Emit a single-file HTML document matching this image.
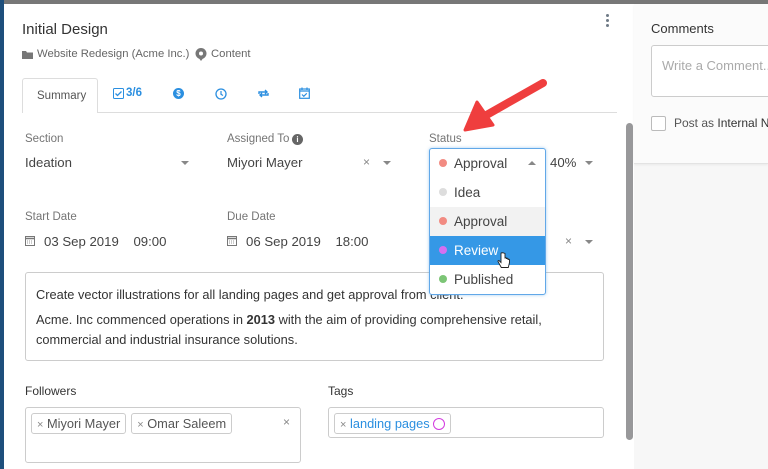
<!DOCTYPE html>
<html><head><style>
*{box-sizing:border-box;margin:0;padding:0}
body{width:768px;height:469px;overflow:hidden;background:#f7f7f7;font-family:"Liberation Sans",sans-serif;position:relative;color:#333}
.a{position:absolute}
.lbl{font-size:11.5px;color:#757575}
.val{font-size:13.2px;color:#444}
.car{width:0;height:0;border-left:4px solid transparent;border-right:4px solid transparent;border-top:4px solid #888}
.x{font-size:12px;color:#888}
.dot{display:inline-block;width:8px;height:8px;border-radius:50%;margin-right:7px;vertical-align:1px}
.it{position:absolute;left:0;width:115px;height:29px;font-size:13.5px;padding:7px 0 0 9px;color:#444}
.tag{display:inline-block;border:1px solid #ccc;border-radius:3px;padding:2px 5px;font-size:12.8px;color:#555;margin-right:5px}
</style></head><body>
<div class="a" style="left:0;top:0;width:768px;height:4px;background:#777"></div>
<div class="a" style="left:0;top:0;width:4px;height:469px;background:#1e4f7c"></div>
<div class="a" style="left:4px;top:4px;width:630px;height:465px;background:#fff"></div>
<div class="a" style="left:634px;top:4px;width:134px;height:160px;background:#fbfbfb;border-bottom:1px solid #e3e3e3;box-shadow:0 1px 2px rgba(0,0,0,.06)"></div>
<div class="a" style="left:651px;top:21px;font-size:13px;color:#333">Comments</div>
<div class="a" style="left:651px;top:45px;width:130px;height:52px;border:1px solid #ccc;border-radius:3px;background:#fff;padding:12px 0 0 10px;font-size:13px;color:#aaa;white-space:nowrap">Write a Comment...</div>
<div class="a" style="left:651px;top:116px;width:15px;height:15px;border:1px solid #bbb;border-radius:2px;background:#fff"></div>
<div class="a" style="left:674px;top:116px;font-size:12px;color:#555;white-space:nowrap">Post as <span style="color:#333">Internal Note</span></div>
<div class="a" style="left:626px;top:123px;width:7px;height:317px;background:#98989a;border-radius:4px"></div>
<div class="a" style="left:606px;top:14px;width:3px;height:3px;background:#6f7a86;border-radius:50%;box-shadow:0 5px 0 #6f7a86,0 10px 0 #6f7a86"></div>
<div class="a" style="left:22px;top:21px;font-size:15px;color:#333">Initial Design</div>
<svg class="a" style="left:22px;top:50px" width="12" height="10" viewBox="0 0 12 10"><path d="M0 1h4l1 1.5h6V9H0z" fill="#777"/></svg>
<div class="a" style="left:37px;top:48px;font-size:11.3px;color:#666">Website Redesign (Acme Inc.)</div>
<svg class="a" style="left:195px;top:48px" width="12" height="13" viewBox="0 0 12 13"><circle cx="6" cy="5.5" r="5.5" fill="#777"/><path d="M3 9l3 4 3-4z" fill="#777"/><circle cx="6" cy="5.5" r="2" fill="#fff"/></svg>
<div class="a" style="left:211px;top:48px;font-size:11.3px;color:#666">Content</div>
<div class="a" style="left:22px;top:112px;width:595px;height:1px;background:#ddd"></div>
<div class="a" style="left:22px;top:78px;width:76px;height:35px;border:1px solid #ddd;border-bottom:none;border-radius:3px 3px 0 0;background:#fff;font-size:11.5px;color:#555;padding:11px 0 0 14px">Summary</div>
<svg class="a" style="left:113px;top:88px" width="11" height="11" viewBox="0 0 11 11"><rect x=".5" y=".5" width="10" height="10" rx="1" fill="none" stroke="#2b8fe0"/><path d="M2.5 5.5l2 2 4-4" fill="none" stroke="#2b8fe0" stroke-width="1.3"/></svg>
<div class="a" style="left:126px;top:87px;font-size:11.5px;color:#2b8fe0;font-weight:bold">3/6</div>
<div class="a" style="left:173px;top:88px;width:11px;height:11px;border-radius:50%;background:#2b8fe0;color:#fff;font-size:8px;font-weight:bold;text-align:center;line-height:11px">$</div>
<svg class="a" style="left:215px;top:88px" width="12" height="12" viewBox="0 0 12 12"><circle cx="6" cy="6" r="5" fill="none" stroke="#2b8fe0" stroke-width="1.3"/><path d="M6 3v3.3l2 1.2" fill="none" stroke="#2b8fe0" stroke-width="1.2"/></svg>
<svg class="a" style="left:257px;top:88px" width="13" height="11" viewBox="0 0 13 11"><path d="M2 6V4h8M8 2l2 2-2 2M11 5v2H3M5 9L3 7l2-2" fill="none" stroke="#2b8fe0" stroke-width="1.4"/></svg>
<svg class="a" style="left:299px;top:87px" width="11" height="12" viewBox="0 0 11 12"><rect x=".7" y="2" width="9.6" height="9.3" fill="none" stroke="#2b8fe0" stroke-width="1.2"/><path d="M.7 4h9.6M3 .5v2.5M8 .5v2.5M3 7.5l1.8 1.8 3-3" fill="none" stroke="#2b8fe0" stroke-width="1.2"/></svg>
<div class="a lbl" style="left:25px;top:133px">Section</div>
<div class="a val" style="left:25px;top:155px">Ideation</div>
<div class="a car" style="left:181px;top:161px"></div>
<div class="a lbl" style="left:227px;top:133px">Assigned To</div>
<div class="a" style="left:292px;top:134px;width:11px;height:11px;border-radius:50%;background:#666;color:#fff;font-size:8px;font-weight:bold;text-align:center;line-height:11px">i</div>
<div class="a val" style="left:227px;top:155px">Miyori Mayer</div>
<div class="a x" style="left:363px;top:155px">×</div>
<div class="a car" style="left:383px;top:161px"></div>
<div class="a lbl" style="left:429px;top:133px">Status</div>
<div class="a val" style="left:550px;top:155px">40%</div>
<div class="a car" style="left:585px;top:161px"></div>
<div class="a lbl" style="left:25px;top:211px">Start Date</div>
<div class="a lbl" style="left:227px;top:211px">Due Date</div>
<svg class="a" style="left:25px;top:235px" width="10" height="11" viewBox="0 0 10 11"><rect x=".5" y="1.5" width="9" height="9" fill="none" stroke="#777"/><path d="M.5 3.5h9" stroke="#777" stroke-width="1.5"/><path d="M2 6h6M2 8h6" stroke="#999" stroke-dasharray="1 1"/></svg>
<div class="a val" style="left:44px;top:234px">03 Sep 2019&nbsp;&nbsp;&nbsp; 09:00</div>
<svg class="a" style="left:227px;top:235px" width="10" height="11" viewBox="0 0 10 11"><rect x=".5" y="1.5" width="9" height="9" fill="none" stroke="#777"/><path d="M.5 3.5h9" stroke="#777" stroke-width="1.5"/><path d="M2 6h6M2 8h6" stroke="#999" stroke-dasharray="1 1"/></svg>
<div class="a val" style="left:246px;top:234px">06 Sep 2019&nbsp;&nbsp;&nbsp; 18:00</div>
<div class="a x" style="left:565px;top:234px">×</div>
<div class="a car" style="left:585px;top:240px"></div>
<div class="a" style="left:25px;top:272px;width:579px;height:89px;border:1px solid #ccc;border-radius:3px;padding:12px 10px;font-size:12.8px;color:#333;line-height:20px">
<div style="margin-bottom:5px;white-space:nowrap">Create vector illustrations for all landing pages and get approval from client.</div>
<div>Acme. Inc commenced operations in <b>2013</b> with the aim of providing comprehensive retail, commercial and industrial insurance solutions.</div></div>
<div class="a" style="left:25px;top:384px;font-size:12px;color:#333">Followers</div>
<div class="a" style="left:328px;top:384px;font-size:12px;color:#333">Tags</div>
<div class="a" style="left:25px;top:407px;width:276px;height:56px;border:1px solid #ccc;border-radius:3px;padding:5px 5px"><span class="tag"><span style="font-size:11px;color:#888">×</span> Miyori Mayer</span><span class="tag"><span style="font-size:11px;color:#888">×</span> Omar Saleem</span></div>
<div class="a x" style="left:283px;top:415px">×</div>
<div class="a" style="left:328px;top:407px;width:276px;height:31px;border:1px solid #ccc;border-radius:3px;padding:5px 5px"><span class="tag" style="color:#2b8fe0"><span style="font-size:11px;color:#888">×</span> landing pages <span style="display:inline-block;width:12px;height:12px;border:1.5px solid #d33be0;border-radius:50%;vertical-align:-2px"></span></span></div>
<div class="a" style="left:429px;top:148px;width:117px;height:147px;border:1px solid #62a8e8;border-radius:3px;background:#fff;box-shadow:0 0 3px rgba(80,160,230,.5);overflow:hidden">
<div class="it" style="top:0"><span class="dot" style="background:#f28b82"></span>Approval</div>
<div class="a" style="left:98px;top:12px;width:0;height:0;border-left:4px solid transparent;border-right:4px solid transparent;border-bottom:4px solid #888"></div>
<div class="it" style="top:29px"><span class="dot" style="background:#ddd"></span>Idea</div>
<div class="it" style="top:58px;background:#f2f2f2"><span class="dot" style="background:#f28b82"></span>Approval</div>
<div class="it" style="top:87px;background:#3598e6;color:#fff"><span class="dot" style="background:#d56ff0"></span>Review</div>
<div class="it" style="top:116px"><span class="dot" style="background:#7cc576"></span>Published</div>
</div>
<svg class="a" style="left:497px;top:252px" width="14" height="18" viewBox="0 0 14 18"><path d="M4 1.5v9L2.5 9C1.5 8 .5 9 1.3 10l3 5.5h7l1.2-5V8c0-1-1.5-1-1.5 0V7c0-1-1.5-1-1.5 0V6.5c0-1-1.5-1-1.5 0V1.5C6 .5 4 .5 4 1.5z" fill="#fff" stroke="#222" stroke-width=".9"/></svg>
<svg class="a" style="left:455px;top:75px" width="100" height="65" viewBox="0 0 100 65"><path d="M88 8L28 42" stroke="#ef3e3e" stroke-width="8" stroke-linecap="round"/><path d="M10 55L22 27L38 50z" fill="#ef3e3e" stroke="#ef3e3e" stroke-width="3" stroke-linejoin="round"/></svg>
</body></html>
